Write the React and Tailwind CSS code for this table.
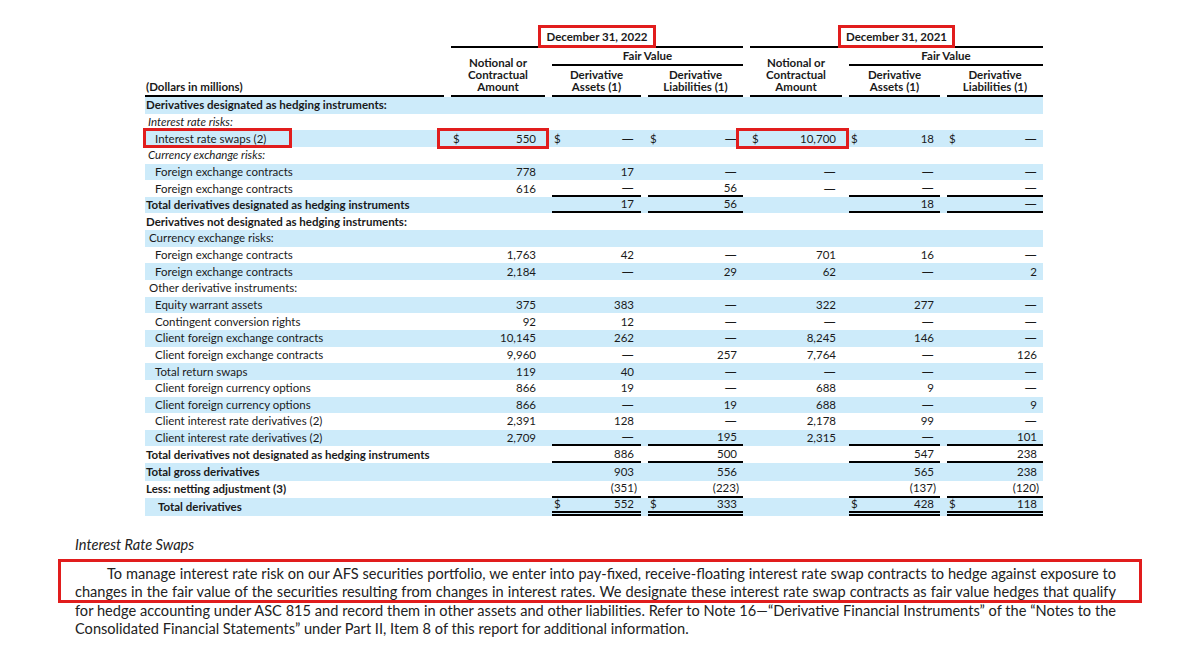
import React from 'react';

const COLS = 'grid grid-cols-[299px_94px_89px_95px_92px_91px_96px] gap-x-[7px]';
const PR = ['pr-[9px]', 'pr-[7px]', 'pr-[6px]', 'pr-[6px]', 'pr-[6px]', 'pr-[6px]'];
const RED = 'border-[3px] border-[#e11d1d]';

// kind: h = bold heading, i = italic sub heading, s = plain sub heading, item = indented line, t = bold total
const rows = [
  { label: 'Derivatives designated as hedging instruments:', kind: 'h' },
  { label: 'Interest rate risks:', kind: 'i' },
  { label: 'Interest rate swaps (2)', kind: 'item', vals: ['550', '—', '—', '10,700', '18', '—'], dollars: [0, 1, 2, 3, 4, 5], boxed: true },
  { label: 'Currency exchange risks:', kind: 'i' },
  { label: 'Foreign exchange contracts', kind: 'item', vals: ['778', '17', '—', '—', '—', '—'] },
  { label: 'Foreign exchange contracts', kind: 'item', vals: ['616', '—', '56', '—', '—', '—'], line: 'single' },
  { label: 'Total derivatives designated as hedging instruments', kind: 't', vals: ['', '17', '56', '', '18', '—'], line: 'single' },
  { label: 'Derivatives not designated as hedging instruments:', kind: 'h' },
  { label: 'Currency exchange risks:', kind: 's' },
  { label: 'Foreign exchange contracts', kind: 'item', vals: ['1,763', '42', '—', '701', '16', '—'] },
  { label: 'Foreign exchange contracts', kind: 'item', vals: ['2,184', '—', '29', '62', '—', '2'] },
  { label: 'Other derivative instruments:', kind: 's' },
  { label: 'Equity warrant assets', kind: 'item', vals: ['375', '383', '—', '322', '277', '—'] },
  { label: 'Contingent conversion rights', kind: 'item', vals: ['92', '12', '—', '—', '—', '—'] },
  { label: 'Client foreign exchange contracts', kind: 'item', vals: ['10,145', '262', '—', '8,245', '146', '—'] },
  { label: 'Client foreign exchange contracts', kind: 'item', vals: ['9,960', '—', '257', '7,764', '—', '126'] },
  { label: 'Total return swaps', kind: 'item', vals: ['119', '40', '—', '—', '—', '—'] },
  { label: 'Client foreign currency options', kind: 'item', vals: ['866', '19', '—', '688', '9', '—'] },
  { label: 'Client foreign currency options', kind: 'item', vals: ['866', '—', '19', '688', '—', '9'] },
  { label: 'Client interest rate derivatives (2)', kind: 'item', vals: ['2,391', '128', '—', '2,178', '99', '—'] },
  { label: 'Client interest rate derivatives (2)', kind: 'item', vals: ['2,709', '—', '195', '2,315', '—', '101'], line: 'single' },
  { label: 'Total derivatives not designated as hedging instruments', kind: 't', vals: ['', '886', '500', '', '547', '238'], line: 'single' },
  { label: 'Total gross derivatives', kind: 't', vals: ['', '903', '556', '', '565', '238'], tall: true },
  { label: 'Less: netting adjustment (3)', kind: 't', vals: ['', '(351)', '(223)', '', '(137)', '(120)'], line: 'single', tall: true },
  { label: 'Total derivatives', kind: 't', indent: true, vals: ['', '552', '333', '', '428', '118'], dollars: [1, 2, 4, 5], line: 'double', tall: true },
];

const labelClass = {
  h: 'pl-[1px] font-bold',
  i: 'pl-[3px] italic',
  s: 'pl-[4px]',
  item: 'pl-[10px]',
  t: 'pl-[1px] font-bold',
};

function Value({ v }) {
  // Lato's em dash is short; stretch it to the width of the printed one
  if (v === '—') return <span className="inline-block scale-x-[1.4] origin-right font-bold">—</span>;
  return <span>{v}</span>;
}

function Row({ r, i }) {
  const vals = r.vals || ['', '', '', '', '', ''];
  const dollars = r.dollars || [];
  return (
    <div className={`${COLS} ${r.tall ? 'h-[17.5px]' : 'h-[16.65px]'} ${i % 2 === 0 ? 'bg-[#cdebfa]' : ''}`}>
      <div className={`flex items-center whitespace-nowrap ${r.indent ? 'pl-[13px] font-bold' : labelClass[r.kind]} ${r.boxed ? 'relative' : ''}`}>
        {r.label}
        {r.boxed && <span className={`absolute -left-[2px] -top-[2px] -bottom-[1px] w-[149px] ${RED}`} />}
      </div>
      {vals.map((v, c) => {
        const lined = r.line && (c === 1 || c === 2 || c === 4 || c === 5);
        const lineClass = lined
          ? r.line === 'double'
            ? 'border-b-[5px] border-double border-black'
            : 'border-b-2 border-black'
          : '';
        const boxed = r.boxed && (c === 0 || c === 3);
        return (
          <div
            key={c}
            className={`flex items-center justify-between pl-[2px] ${v.startsWith('(') ? 'pr-[4px]' : PR[c]} ${lineClass} ${boxed ? 'relative' : ''}`}
          >
            <span>{dollars.includes(c) ? '$' : ''}</span>
            <Value v={v} />
            {boxed && (
              <span
                className={`absolute -top-[2px] -bottom-[2px] -left-[14px] ${c === 0 ? '-right-[4px]' : '-right-[7px]'} ${RED}`}
              />
            )}
          </div>
        );
      })}
    </div>
  );
}

function DateHead({ text }) {
  return (
    <div className="col-span-3 flex items-end justify-center border-b-2 border-black">
      <span className={`relative top-[2px] bg-white px-[5px] h-[23px] flex items-center font-bold ${RED}`}>{text}</span>
    </div>
  );
}

function SubHead({ top, bottom }) {
  return (
    <div className="flex flex-col justify-end items-center pb-[2px] font-bold border-b-2 border-black">
      <span>{top}</span>
      <span>{bottom}</span>
    </div>
  );
}

function NotionalHead() {
  return (
    <div className="row-span-2 flex flex-col justify-end items-center pb-[2px] font-bold text-center border-b-2 border-black">
      <span>Notional or</span>
      <span>Contractual</span>
      <span>Amount</span>
    </div>
  );
}

export default function App() {
  return (
    <div className="w-[1200px] h-[668px] bg-white text-[#1a1a1a] text-[11.5px] leading-[12px] [font-family:Lato,'Open_Sans',sans-serif] overflow-hidden">
      <div className="ml-[145px] w-[898px] pt-[25px]">
        <div className={`${COLS} grid-rows-[23px_18px_31px]`}>
          <div className="row-span-3 flex items-end pb-[2px] pl-[1px] font-bold border-b-2 border-black">(Dollars in millions)</div>
          <DateHead text="December 31, 2022" />
          <DateHead text="December 31, 2021" />
          <NotionalHead />
          <div className="col-span-2 flex items-center justify-center font-bold border-b-2 border-black">Fair Value</div>
          <NotionalHead />
          <div className="col-span-2 flex items-center justify-center font-bold border-b-2 border-black">Fair Value</div>
          <SubHead top="Derivative" bottom="Assets (1)" />
          <SubHead top="Derivative" bottom="Liabilities (1)" />
          <SubHead top="Derivative" bottom="Assets (1)" />
          <SubHead top="Derivative" bottom="Liabilities (1)" />
        </div>
        {rows.map((r, i) => (
          <Row key={i} r={r} i={i} />
        ))}
      </div>

      <div className="ml-[75px] w-[1041px] mt-[20px] text-[14.6px] leading-[18.4px] text-[#222]">
        <div className="italic">Interest Rate Swaps</div>
        <div className="relative mt-[11px]">
          <div className="pl-[32px] text-justify [text-align-last:justify] whitespace-nowrap">
            To manage interest rate risk on our AFS securities portfolio, we enter into pay-fixed, receive-floating interest rate swap contracts to hedge against exposure to
          </div>
          <div className="text-justify [text-align-last:justify] whitespace-nowrap">
            changes in the fair value of the securities resulting from changes in interest rates. We designate these interest rate swap contracts as fair value hedges that qualify
          </div>
          <div className="text-justify [text-align-last:justify] whitespace-nowrap">
            for hedge accounting under ASC 815 and record them in other assets and other liabilities. Refer to Note 16—“Derivative Financial Instruments” of the “Notes to the
          </div>
          <div className="whitespace-nowrap">
            Consolidated Financial Statements” under Part II, Item 8 of this report for additional information.
          </div>
          <span className={`absolute -left-[17px] -right-[26px] -top-[6px] h-[44px] ${RED}`} />
        </div>
      </div>
    </div>
  );
}
